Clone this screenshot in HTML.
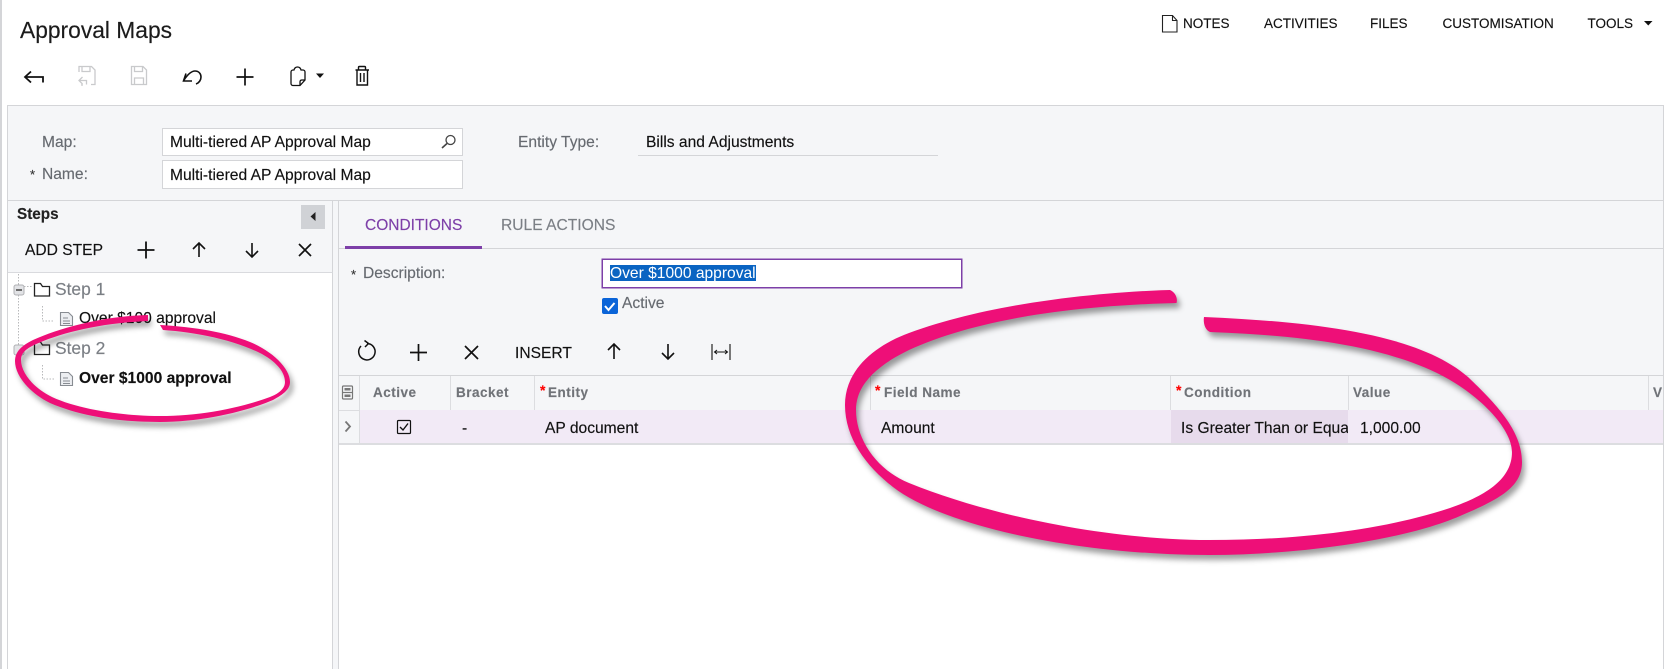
<!DOCTYPE html>
<html><head><meta charset="utf-8">
<style>
html,body{margin:0;padding:0;background:#fff}
#p{position:relative;width:1667px;height:669px;overflow:hidden;background:#fff;font-family:"Liberation Sans",Arial,sans-serif;color:#111}
.a{position:absolute}
.t{position:absolute;white-space:nowrap;line-height:20px;height:20px;font-size:15.6px;-webkit-text-stroke:.15px currentColor}
.g{color:#666a70}
.h{font-weight:bold;font-size:13.5px;color:#707378;letter-spacing:.5px}
.r{color:#f00;font-size:14px;font-weight:bold}
svg{position:absolute;overflow:visible}
.i{fill:none;stroke:#111;stroke-width:1.6}
</style></head><body><div id="p">
<div class="a" style="left:0;top:0;width:2px;height:669px;background:#d4d5d8"></div>

<div class="t" style="left:20px;top:18px;font-size:22.8px;line-height:24px;height:24px;color:#1b1b1b">Approval Maps</div>

<svg style="left:0;top:0" width="1667" height="100" viewBox="0 0 1667 100">
<path d="M1162.5 15.5h10l4.5 5v11.5h-14.5z M1172.5 15.5v5h4.500" fill="none" stroke="#222" stroke-width="1.100"/>
<path d="M1644 21h8.500l-4.250 4.500z" fill="#111"/>
<!-- back -->
<path class="i" d="M43 82.500V77H25.500M31 71.500L25 77l6 5.500" style="stroke-width:1.800"/>
<!-- save-close -->
<g fill="none" stroke="#c9cacc" stroke-width="1.300"><path d="M79 72v-5.500h12.500l3.500 3.500v14.500h-4M82 66.500v5h8v-5M79 80.500h7.500v4M82.500 77l-3.500 3.500 3.500 3.500M81 85h2"/>
<path d="M131.500 66.500h11.500l3.500 3.500v14.500h-15zM134.500 66.500v5h8v-5M134.500 84.500v-6.500h9v6.500"/></g>
<!-- undo -->
<path class="i" d="M186 73.500L183.500 81L192 81M184 80C188 74 192 71 195 71C199 71 201 74 201 77C201 80 199 83 196 84" style="stroke-width:1.600"/>
<!-- plus -->
<path d="M245 68.500v17M236.500 77h17" stroke="#111" stroke-width="1.700" fill="none"/>
<!-- clipboard -->
<path class="i" d="M294 70H293a2 2 0 0 0-2 2V83.500a2 2 0 0 0 2 2H300L305 80V72a2 2 0 0 0-2-2H301M294 70.500C294 68 296 67 297.500 67C299 67 301 68 301 70.500M300 85.500V82c0-1.500 1-2 2-2H305" style="stroke-width:1.300"/>
<path d="M316 73.500h8l-4 4.500z" fill="#111"/>
<!-- trash -->
<path class="i" d="M355.500 70h13.500M358.500 70v-2.500c0-.6.400-1 1-1h5c.6 0 1 .4 1 1V70M357 70v15h10.500V70M360.500 73v9M364 73v9" style="stroke-width:1.400"/>
</svg>
<div class="t" style="left:1183px;top:13.500px;font-size:13.500px">NOTES</div>
<div class="t" style="left:1264px;top:13.500px;font-size:13.500px">ACTIVITIES</div>
<div class="t" style="left:1370px;top:13.500px;font-size:13.500px">FILES</div>
<div class="t" style="left:1442.500px;top:13.500px;font-size:13.500px">CUSTOMISATION</div>
<div class="t" style="left:1587.500px;top:13.500px;font-size:13.500px">TOOLS</div>

<div class="a" style="left:7px;top:105px;width:1655px;height:564px;background:#f5f6f8;border:1px solid #d4d5d8;border-bottom:0"></div>
<div class="a" style="left:8px;top:200px;width:1655px;height:1px;background:#d4d5d8"></div>

<div class="t g" style="left:42px;top:133px">Map:</div>
<div class="t" style="left:30px;top:165px;font-size:13px;color:#333">*</div>
<div class="t g" style="left:42px;top:165px">Name:</div>
<div class="a" style="left:162px;top:128px;width:299px;height:26px;background:#fff;border:1px solid #d4d5d8"></div>
<div class="a" style="left:162px;top:160px;width:299px;height:27px;background:#fff;border:1px solid #d4d5d8"></div>
<div class="t" style="left:170px;top:132.500px">Multi-tiered AP Approval Map</div>
<div class="t" style="left:170px;top:165.500px">Multi-tiered AP Approval Map</div>
<svg style="left:0;top:0" width="600" height="200"><circle cx="450.500" cy="140" r="4.500" fill="none" stroke="#444" stroke-width="1.300"/><path d="M447 143.500l-5 4.500" stroke="#444" stroke-width="1.600"/></svg>
<div class="t g" style="left:518px;top:133px">Entity Type:</div>
<div class="t" style="left:646px;top:133px">Bills and Adjustments</div>
<div class="a" style="left:638px;top:155px;width:300px;height:1px;background:#d4d5d8"></div>

<!-- left panel -->
<div class="a" style="left:8px;top:201px;width:324px;height:71px;background:#f5f6f8;border-right:1px solid #d4d5d8"></div>
<div class="a" style="left:8px;top:272px;width:324px;height:397px;background:#fff;border-top:1px solid #d9dade;border-right:1px solid #d4d5d8"></div>
<div class="t" style="left:17px;top:205px;font-weight:bold;font-size:15.300px;color:#222">Steps</div>
<div class="a" style="left:301px;top:205px;width:24px;height:24px;background:#d0d2d6"></div>
<div class="t" style="left:25px;top:241px">ADD STEP</div>
<div class="t g" style="left:55px;top:279px;font-size:17.400px;color:#7b7f85">Step 1</div>
<div class="t" style="left:79px;top:308.500px">Over $100 approval</div>
<div class="t g" style="left:55px;top:338px;font-size:17.400px;color:#7b7f85">Step 2</div>
<div class="t" style="left:79px;top:369px;font-weight:bold">Over $1000 approval</div>
<svg style="left:0;top:190px" width="340" height="220" viewBox="0 190 340 220">
<path d="M315.500 212v9l-5-4.500z" fill="#222"/>
<path d="M146 241.500v17M137.500 250h17" stroke="#111" stroke-width="1.800"/>
<path d="M199 257v-14M193 249l6-6 6 6M252 243v14M246 251l6 6 6-6" fill="none" stroke="#111" stroke-width="1.600"/>
<path d="M299 244l12 12M311 244l-12 12" stroke="#111" stroke-width="1.700"/>
<path d="M18.500 274v78M24 286.500h8M42.500 306v15h12M42.500 365v14h12" fill="none" stroke="#b8b9bb" stroke-width="1" stroke-dasharray="1.500 1.500"/>
<rect x="14" y="285" width="10" height="10" rx="2" fill="#e2e3e6" stroke="#b0b1b4"/><path d="M16 290h6" stroke="#444" stroke-width="1.500"/>
<rect x="14" y="345" width="10" height="10" rx="2" fill="#e2e3e6" stroke="#b0b1b4"/>
<path d="M34.500 283.500h6l2 3h7v9.500h-15z" fill="none" stroke="#222" stroke-width="1.300"/>
<path d="M34.500 342h6l2 3h7v9.500h-15z" fill="none" stroke="#222" stroke-width="1.300"/>
<g fill="#eceef1" stroke="#888c92" stroke-width="1.100"><path d="M60.500 312.500h8l4 4v9h-12z"/><path d="M60.500 372.500h8l4 4v9h-12z"/></g>
<path d="M63 318h5M63 321h7M63 323.500h7M63 378h5M63 381h7M63 383.500h7" stroke="#888c92" fill="none"/>
</svg>

<!-- right panel -->
<div class="a" style="left:338px;top:201px;width:1325px;height:468px;border-left:1px solid #d4d5d8"></div>
<div class="a" style="left:339px;top:248px;width:1324px;height:1px;background:#d4d5d8"></div>
<div class="a" style="left:345px;top:246px;width:137px;height:3px;background:#7d3fa8"></div>
<div class="t" style="left:365px;top:215.500px;color:#7d3fa8;font-size:15.500px">CONDITIONS</div>
<div class="t" style="left:501px;top:215.500px;color:#7b7f85">RULE ACTIONS</div>
<div class="t" style="left:351px;top:265px;font-size:13px;color:#333">*</div>
<div class="t g" style="left:363px;top:264px">Description:</div>
<div class="a" style="left:602px;top:259px;width:358px;height:27px;background:#fff;border:1px solid #7d3fa8;box-shadow:0 0 0 .5px #7d3fa8"></div>
<div class="a" style="left:610px;top:265px;width:146px;height:16px;background:#0a64c2"></div>
<div class="t" style="left:610px;top:263.500px;color:#fff;-webkit-text-stroke:0">Over $1000 approval</div>
<div class="a" style="left:602px;top:298px;width:16px;height:16px;background:#0a64d8;border-radius:2px"></div>
<div class="t g" style="left:622px;top:294px">Active</div>
<div class="t" style="left:515px;top:344px">INSERT</div>

<!-- grid -->
<div class="a" style="left:339px;top:375px;width:1324px;height:34px;border-top:1px solid #d4d5d8;border-bottom:1px solid #dcdde0"></div>
<div class="a" style="left:339px;top:444px;width:1324px;height:225px;background:#fff"></div>
<div class="a" style="left:359px;top:410px;width:1304px;height:33px;background:#f2eaf6"></div>
<div class="a" style="left:339px;top:443px;width:1324px;height:2px;background:#dcdde0"></div>
<div class="a" style="left:1171px;top:410px;width:177px;height:33px;background:#e7dbec"></div>
<div class="a" style="left:359px;top:376px;width:1px;height:68px;background:#dcdde0"></div>
<div class="a" style="left:450px;top:376px;width:1px;height:34px;background:#dcdde0"></div>
<div class="a" style="left:534px;top:376px;width:1px;height:34px;background:#dcdde0"></div>
<div class="a" style="left:870px;top:376px;width:1px;height:34px;background:#dcdde0"></div>
<div class="a" style="left:1170px;top:376px;width:1px;height:34px;background:#dcdde0"></div>
<div class="a" style="left:1348px;top:376px;width:1px;height:34px;background:#dcdde0"></div>
<div class="a" style="left:1648px;top:376px;width:1px;height:34px;background:#dcdde0"></div>
<div class="t h" style="left:373px;top:382.500px">Active</div>
<div class="t h" style="left:456px;top:382.500px">Bracket</div>
<div class="t r" style="left:540px;top:380px">*</div><div class="t h" style="left:548px;top:382.500px">Entity</div>
<div class="t r" style="left:875px;top:380px">*</div><div class="t h" style="left:884px;top:382.500px">Field Name</div>
<div class="t r" style="left:1176px;top:380px">*</div><div class="t h" style="left:1184px;top:382.500px">Condition</div>
<div class="t h" style="left:1353px;top:382.500px">Value</div>
<div class="a" style="left:1653px;top:382.500px;width:10px;height:20px;overflow:hidden"><div class="t h" style="left:0;top:0">V</div></div>
<div class="t" style="left:462px;top:419px">-</div>
<div class="t" style="left:545px;top:419px">AP document</div>
<div class="t" style="left:881px;top:419px">Amount</div>
<div class="a" style="left:1171px;top:410px;width:177px;height:33px;overflow:hidden"><div class="t" style="left:10px;top:9px">Is Greater Than or Equal To</div></div>
<div class="t" style="left:1360px;top:419px">1,000.00</div>

<svg style="left:0;top:0" width="1667" height="669">
<path d="M605 306l3.500 4 6-7" fill="none" stroke="#fff" stroke-width="2"/>
<!-- grid toolbar -->
<path class="i" d="M367 343.500A8.200 8.200 0 1 1 361 346M364.500 340.500L368.500 343.500L365 347" style="stroke-width:1.500"/>
<path d="M418.500 344v17M410 352.500h17" stroke="#111" stroke-width="1.700"/>
<path d="M465 346l13 13M478 346l-13 13" stroke="#111" stroke-width="1.700"/>
<path d="M614 359v-15M608 350l6-6 6 6M668 344v15M662 353l6 6 6-6" fill="none" stroke="#111" stroke-width="1.600"/>
<path d="M712 344v16M730 344v16" stroke="#111" stroke-width="1.100"/><path d="M715 352h12M717 350l-2.500 2 2.500 2M725 350l2.500 2-2.500 2" stroke="#111" fill="none"/>
<rect x="342.500" y="386" width="10" height="13" rx="1" fill="none" stroke="#777" stroke-width="1.200"/><path d="M342 392.500h11" stroke="#777" stroke-width="1.200"/><rect x="344.500" y="388" width="6" height="2.500" fill="#777"/><rect x="344.500" y="394.500" width="6" height="2.500" fill="#777"/>
<path d="M345.500 421.500l4.500 5-4.500 5" fill="none" stroke="#777" stroke-width="1.800"/>
<rect x="397.500" y="420.500" width="13" height="13" rx="1" fill="none" stroke="#111" stroke-width="1.200"/>
<path d="M400 427l3 3 5-6.500" fill="none" stroke="#111" stroke-width="1.400"/>
<!-- pink ink -->
<g fill="#ee0f78" style="filter:drop-shadow(3px 5px 3px rgba(0,0,0,.38))">
<path d="M1170 290C1100 292 990 303 909 333C871 347 845 372 845 405C845 438 866 466 893 487C945 527 1080 555 1209 555C1300 555 1405 540 1460 516C1500 499 1522 487 1522 462C1522 430 1495 403 1468 377C1420 335 1320 322 1204 317C1203 323 1205 330 1210 332C1290 335 1375 343 1437 373C1478 393 1512 428 1512 452C1512 478 1488 495 1450 508C1380 531 1295 540 1209 540C1110 540 990 516 909 483C875 469 856 438 856 410C856 384 878 365 909 350C970 322 1060 306 1176.500 303C1178 298 1175 292 1170 290Z"/>
<path d="M148 315C105 316 62 327 33 340C21 346 15 352 15 361C15 376 30 393 50 403C85 418 125 422 160 422C200 422 245 412 273 400C284 394 290 389 290 382C290 368 272 351 250 342C225 332 195 327 160 325L163 330C195 332 235 340 262 354C278 363 285 373 285 382C285 389 278 394 270 397C240 408 200 416 160 416C125 416 80 410 52 397C32 387 21 372 21 360C21 353 26 349 34 345C60 333 100 323 148 321Z"/>
</g>
</svg>
</div></body></html>
